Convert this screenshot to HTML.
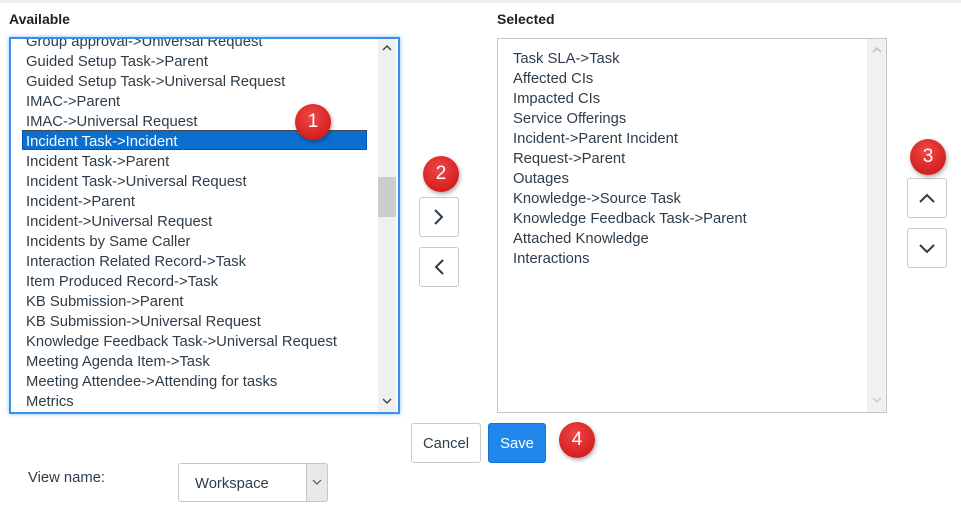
<!DOCTYPE html>
<html><head><style>
*{box-sizing:border-box;margin:0;padding:0}
body{width:961px;height:513px;background:#fff;position:relative;overflow:hidden;font-family:"Liberation Sans",sans-serif;color:#2e3d49;}
.a{position:absolute}
.lbl{font-weight:bold;font-size:14px;color:#222}
.item{position:absolute;left:0;height:20px;line-height:20px;font-size:14.8px;white-space:nowrap;color:#2e3d49}
.btn{position:absolute;border:1px solid #c9c9c9;border-radius:3px;background:#fff}
.badge{position:absolute;width:36px;height:36px;border-radius:50%;background:radial-gradient(circle at 45% 35%,#f04848,#d42020 70%,#b81818);color:#fff;font-size:19px;text-align:center;line-height:36px;box-shadow:1px 2px 4px rgba(0,0,0,.35)}
</style></head><body>
<div class="a" style="left:0;top:0;width:961px;height:3px;background:#efefef"></div>
<div class="a lbl" style="left:9px;top:11px">Available</div>
<div class="a lbl" style="left:497px;top:11px">Selected</div>

<div class="a" style="left:9px;top:37px;width:391px;height:377px;border:2px solid #3a8fe8;box-shadow:0 0 4px rgba(58,143,232,.6);overflow:hidden">
 <div class="a" style="left:0;top:0;width:380px;height:373px">
  <div class="a" style="left:11px;top:91px;width:345px;height:20px;background:#0b6fd0;outline:1px dotted #333;outline-offset:-1px"></div>
  <div class="a" style="left:15px;top:-7px;width:360px">
   <div class="item" style="top:0">Group approval->Universal Request</div>
   <div class="item" style="top:20px">Guided Setup Task->Parent</div>
   <div class="item" style="top:40px">Guided Setup Task->Universal Request</div>
   <div class="item" style="top:60px">IMAC->Parent</div>
   <div class="item" style="top:80px">IMAC->Universal Request</div>
   <div class="item" style="top:100px;color:#fff">Incident Task->Incident</div>
   <div class="item" style="top:120px">Incident Task->Parent</div>
   <div class="item" style="top:140px">Incident Task->Universal Request</div>
   <div class="item" style="top:160px">Incident->Parent</div>
   <div class="item" style="top:180px">Incident->Universal Request</div>
   <div class="item" style="top:200px">Incidents by Same Caller</div>
   <div class="item" style="top:220px">Interaction Related Record->Task</div>
   <div class="item" style="top:240px">Item Produced Record->Task</div>
   <div class="item" style="top:260px">KB Submission->Parent</div>
   <div class="item" style="top:280px">KB Submission->Universal Request</div>
   <div class="item" style="top:300px">Knowledge Feedback Task->Universal Request</div>
   <div class="item" style="top:320px">Meeting Agenda Item->Task</div>
   <div class="item" style="top:340px">Meeting Attendee->Attending for tasks</div>
   <div class="item" style="top:360px">Metrics</div>
  </div>
 </div>
 <div class="a" style="left:367px;top:0;width:18px;height:373px;background:#f0f0f0"></div>
 <div class="a" style="left:367px;top:138px;width:18px;height:40px;background:#cdcdcd"></div>
 <svg class="a" style="left:370px;top:4px" width="12" height="10"><path d="M2 7L6 3L10 7" stroke="#444" stroke-width="1.5" fill="none"/></svg>
 <svg class="a" style="left:370px;top:357px" width="12" height="10"><path d="M2 3L6 7L10 3" stroke="#444" stroke-width="1.5" fill="none"/></svg>
</div>

<div class="a" style="left:497px;top:38px;width:390px;height:375px;border:1px solid #c6c6c6;overflow:hidden">
 <div class="a" style="left:369px;top:0;width:20px;height:373px;background:#f1f1f1"></div>
 <svg class="a" style="left:373px;top:6px" width="12" height="10"><path d="M2 7L6 3L10 7" stroke="#bbb" stroke-width="1.5" fill="none"/></svg>
 <svg class="a" style="left:373px;top:356px" width="12" height="10"><path d="M2 3L6 7L10 3" stroke="#ccc" stroke-width="1.5" fill="none"/></svg>
 <div class="a" style="left:15px;top:10px;width:340px">
  <div class="item" style="top:0">Task SLA->Task</div>
  <div class="item" style="top:20px">Affected CIs</div>
  <div class="item" style="top:40px">Impacted CIs</div>
  <div class="item" style="top:60px">Service Offerings</div>
  <div class="item" style="top:80px">Incident->Parent Incident</div>
  <div class="item" style="top:100px">Request->Parent</div>
  <div class="item" style="top:120px">Outages</div>
  <div class="item" style="top:140px">Knowledge->Source Task</div>
  <div class="item" style="top:160px">Knowledge Feedback Task->Parent</div>
  <div class="item" style="top:180px">Attached Knowledge</div>
  <div class="item" style="top:200px">Interactions</div>
 </div>
</div>

<div class="btn" style="left:419px;top:197px;width:40px;height:40px"><svg width="38" height="38"><path d="M15 12L22 19L15 26" stroke="#2e3d49" stroke-width="2" fill="none"/></svg></div>
<div class="btn" style="left:419px;top:247px;width:40px;height:40px"><svg width="38" height="38"><path d="M23 12L16 19L23 26" stroke="#2e3d49" stroke-width="2" fill="none"/></svg></div>
<div class="btn" style="left:907px;top:178px;width:40px;height:40px"><svg width="38" height="38"><path d="M12 23L19 16L26 23" stroke="#2e3d49" stroke-width="2" fill="none"/></svg></div>
<div class="btn" style="left:907px;top:228px;width:40px;height:40px"><svg width="38" height="38"><path d="M12 16L19 23L26 16" stroke="#2e3d49" stroke-width="2" fill="none"/></svg></div>

<div class="btn" style="left:411px;top:423px;width:70px;height:40px;font-size:14.8px;line-height:40px;text-align:center">Cancel</div>
<div class="a" style="left:488px;top:423px;width:58px;height:40px;background:#2088ec;border:1px solid #1673d1;border-radius:3px;color:#fff;font-size:14.8px;line-height:40px;text-align:center">Save</div>

<div class="a" style="left:28px;top:470px;font-size:14.8px;color:#2e3d49">View name:</div>
<div class="a" style="left:178px;top:463px;width:150px;height:39px;border:1px solid #c6c6c6;border-radius:3px;overflow:hidden">
 <div class="a" style="left:16px;top:2px;line-height:37px;font-size:14.8px">Workspace</div>
 <div class="a" style="left:127px;top:0;width:22px;height:37px;background:#e8e8e8;border-left:1px solid #c6c6c6"></div>
 <svg class="a" style="left:132px;top:13px" width="12" height="10"><path d="M2 3L6 7L10 3" stroke="#555" stroke-width="1.2" fill="none"/></svg>
</div>

<div class="badge" style="left:295px;top:104px">1</div>
<div class="badge" style="left:423px;top:156px">2</div>
<div class="badge" style="left:910px;top:139px">3</div>
<div class="badge" style="left:559px;top:422px">4</div>
</body></html>
